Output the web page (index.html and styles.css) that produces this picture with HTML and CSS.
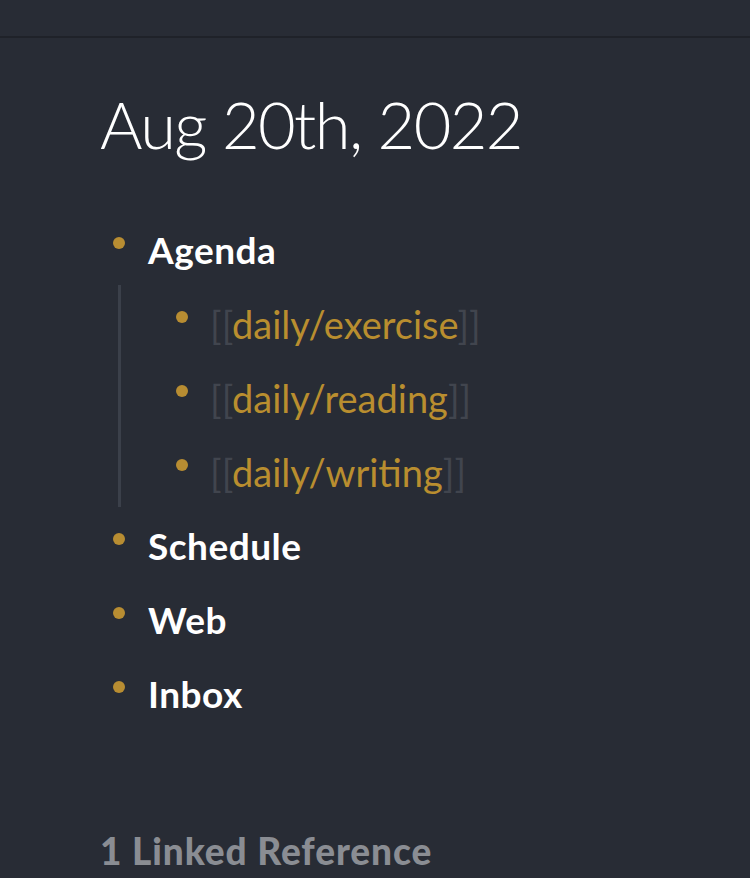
FILE: index.html
```html
<!DOCTYPE html>
<html lang="en">
<head>
<meta charset="utf-8">
<title>Aug 20th, 2022</title>
<link rel="stylesheet" href="styles.css">
</head>
<body>
<div class="topbar"></div>
<main class="page">
  <h1 class="title">Aug 20th, 2022</h1>
  <div class="blocks">
    <div class="block">
      <div class="row"><span class="bullet"><span class="dot"></span></span><span class="text strong">Agenda</span></div>
      <div class="children">
        <div class="row"><span class="bullet"><span class="dot"></span></span><span class="text"><span class="br">[[</span><span class="link">daily/exercise</span><span class="br">]]</span></span></div>
        <div class="row"><span class="bullet"><span class="dot"></span></span><span class="text"><span class="br">[[</span><span class="link">daily/reading</span><span class="br">]]</span></span></div>
        <div class="row"><span class="bullet"><span class="dot"></span></span><span class="text"><span class="br">[[</span><span class="link">daily/writing</span><span class="br">]]</span></span></div>
      </div>
    </div>
    <div class="row"><span class="bullet"><span class="dot"></span></span><span class="text strong">Schedule</span></div>
    <div class="row"><span class="bullet"><span class="dot"></span></span><span class="text strong">Web</span></div>
    <div class="row"><span class="bullet"><span class="dot"></span></span><span class="text strong">Inbox</span></div>
  </div>
  <h2 class="refs">1 Linked Reference</h2>
</main>
</body>
</html>
```
FILE: styles.css
```css
html, body {
  margin: 0;
  padding: 0;
  background: #282c35;
  font-family: Lato, "Open Sans", sans-serif;
  color: #fafafa;
}
body {
  width: 750px;
  height: 878px;
  overflow: hidden;
}
.topbar {
  height: 36px;
  border-bottom: 2px solid #1f2229;
}
.page {
  padding-left: 100px;
}
.title {
  margin: 46px 0 0 0;
  font-size: 65px;
  line-height: 80px;
  font-weight: 300;
  color: #ffffff;
  letter-spacing: -1.6px;
}
.blocks {
  margin-top: 47px;
}
.row {
  display: flex;
  align-items: center;
  height: 74px;
}
.bullet {
  width: 38px;
  display: flex;
  justify-content: center;
  margin-right: 10px;
}
.dot {
  width: 12px;
  height: 12px;
  border-radius: 50%;
  background: #b88d32;
  margin-bottom: 10px;
}
.text {
  font-size: 38px;
  line-height: 44px;
  margin-top: 4px;
}
.strong {
  font-size: 37px;
  font-weight: 700;
  color: #ffffff;
  letter-spacing: 0.5px;
}
.children {
  margin-left: 18px;
  border-left: 3px solid #3b404a;
  padding-left: 42px;
}
.children .bullet {
  margin-right: 9px;
}
.br {
  color: #41454e;
}
.link {
  color: #b98e2f;
}
.refs {
  margin: 101px 0 0 0;
  font-size: 37px;
  line-height: 42px;
  font-weight: 900;
  color: #8a8d93;
  letter-spacing: 0.9px;
}
```
